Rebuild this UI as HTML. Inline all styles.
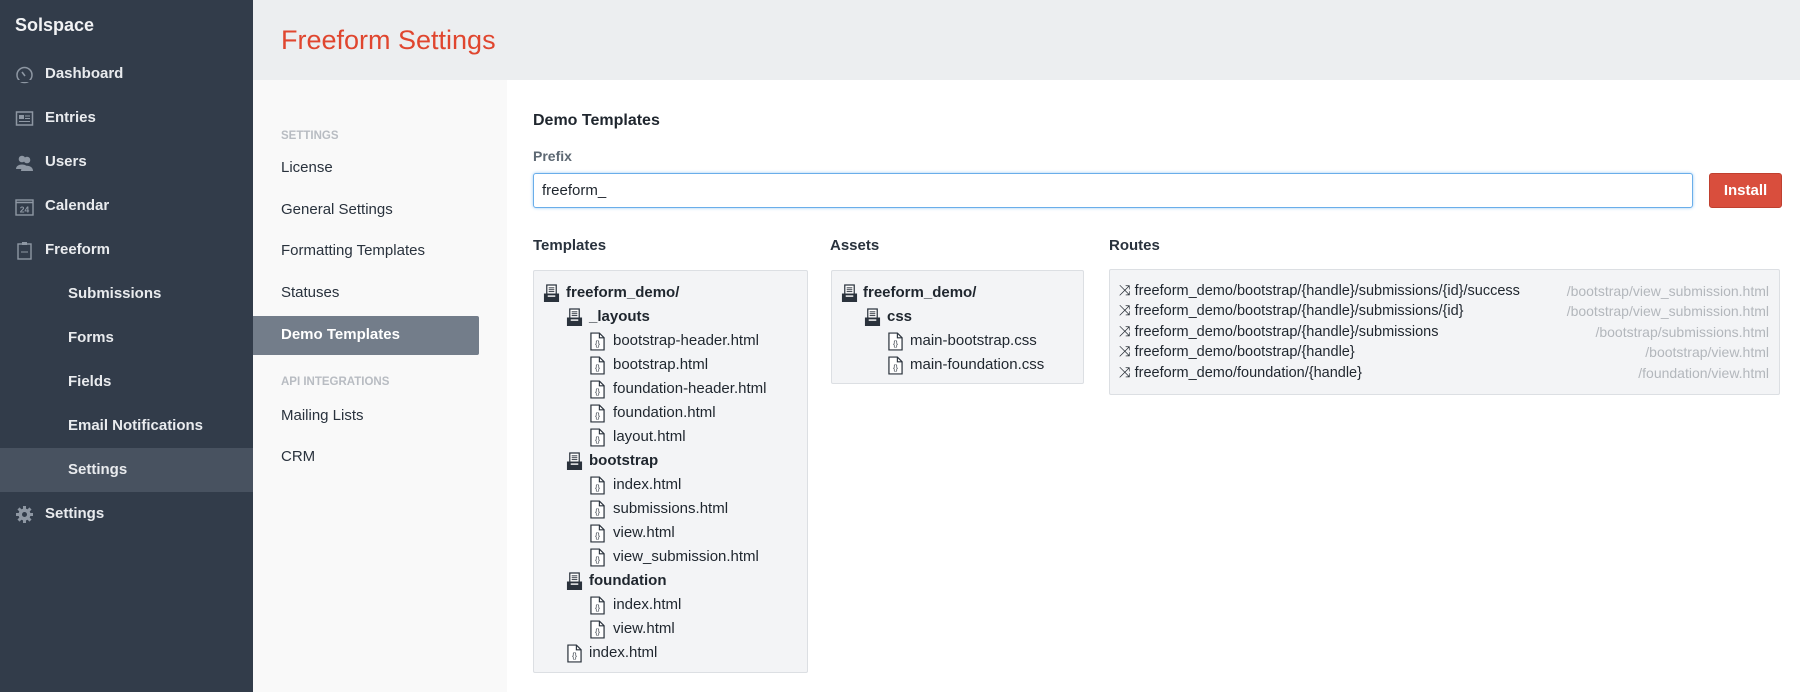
<!DOCTYPE html>
<html><head><meta charset="utf-8"><style>
*{margin:0;padding:0;box-sizing:border-box}
body{width:1800px;height:692px;overflow:hidden;font-family:"Liberation Sans",Arial,sans-serif;background:#fff;position:relative;color:#29323d}
.abs{position:absolute;white-space:nowrap}
#side{position:absolute;left:0;top:0;width:253px;height:692px;background:#323c4a}
.si{position:absolute;left:0;width:253px;height:44px;line-height:44px;color:#e9ebee;font-weight:bold;font-size:15px}
.si .t{position:absolute;left:45px}
.si.sub .t{left:68px}
.si svg{position:absolute;left:15px;top:13px}
#hdr{position:absolute;left:253px;top:0;width:1547px;height:80px;background:#eceef0}
#subnav{position:absolute;left:253px;top:80px;width:254px;height:612px;background:#f9f9f9}
.sn{position:absolute;left:281px;font-size:15px;color:#29323d;white-space:nowrap}
.cap{position:absolute;left:281px;font-size:11.5px;font-weight:bold;color:#b8bcc2;white-space:nowrap}
.box{position:absolute;background:#f3f4f6;border:1px solid #dcdfe3;border-radius:2px}
.row{position:absolute;font-size:15px;color:#1f262e;height:24px;line-height:24px;white-space:nowrap}
.row svg{position:absolute;left:0;top:3px}
.row span{position:absolute;white-space:nowrap}
.b{font-weight:bold}
.rt{position:absolute;left:1119px;font-size:14.5px;color:#1f262e;white-space:nowrap}
.rr{position:absolute;right:31px;font-size:14px;color:#b3b7bc;text-align:right;white-space:nowrap}
</style></head><body>
<svg width="0" height="0" style="position:absolute"><defs>
<symbol id="fold" viewBox="0 0 18 20"><rect x="4" y="1" width="10" height="10" fill="#fff" stroke="#2a323c" stroke-width="1.3"/><line x1="6" y1="4" x2="12" y2="4" stroke="#2a323c"/><line x1="6" y1="6" x2="12" y2="6" stroke="#2a323c"/><line x1="6" y1="8" x2="12" y2="8" stroke="#2a323c"/><path d="M1 10 H17 V19 H1 Z" fill="#2a323c"/><rect x="5" y="12" width="8" height="1.5" fill="#fff"/></symbol>
<symbol id="file" viewBox="0 0 16 20"><path d="M1 1 H10 L15 6 V19 H1 Z" fill="#fff" stroke="#2a323c" stroke-width="1.3"/><path d="M10 1 V6 H15" fill="none" stroke="#2a323c" stroke-width="1.2"/><text x="8" y="15" font-size="8" text-anchor="middle" font-family="Liberation Sans" fill="#2a323c">{}</text></symbol>
</defs></svg>

<div id="side">
<div class="abs" style="left:15px;top:15px;font-size:18px;font-weight:bold;color:#f1f2f4">Solspace</div>
<div class="si" style="top:52px"><svg width="19" height="19" viewBox="0 0 19 19"><circle cx="9.5" cy="10" r="7.5" fill="none" stroke="#8e97a3" stroke-width="1.5"/><line x1="7" y1="7" x2="10" y2="11" stroke="#8e97a3" stroke-width="1.6"/><line x1="2" y1="16" x2="17" y2="16" stroke="#323c4a" stroke-width="2"/></svg><span class="t">Dashboard</span></div>
<div class="si" style="top:96px"><svg width="19" height="19" viewBox="0 0 19 19"><rect x="1.5" y="3" width="16" height="13" fill="none" stroke="#8e97a3" stroke-width="1.5"/><rect x="4" y="6" width="5" height="4" fill="#8e97a3"/><line x1="10" y1="7" x2="15" y2="7" stroke="#8e97a3"/><line x1="10" y1="9.5" x2="15" y2="9.5" stroke="#8e97a3"/><line x1="4" y1="12.5" x2="15" y2="12.5" stroke="#8e97a3"/></svg><span class="t">Entries</span></div>
<div class="si" style="top:140px"><svg width="19" height="19" viewBox="0 0 19 19"><circle cx="7" cy="6" r="3.3" fill="#8e97a3"/><path d="M1 16 C1 10 13 10 13 16 Z" fill="#8e97a3"/><circle cx="12" cy="7" r="3.3" fill="#8e97a3"/><path d="M6 18 C6 11 18 11 18 18 Z" fill="#8e97a3"/></svg><span class="t">Users</span></div>
<div class="si" style="top:184px"><svg width="19" height="19" viewBox="0 0 19 19"><rect x="1" y="3" width="17" height="15" fill="none" stroke="#8e97a3" stroke-width="1.4"/><line x1="1" y1="5.5" x2="18" y2="5.5" stroke="#8e97a3" stroke-width="1.5"/><text x="9.5" y="15.5" font-size="8.5" text-anchor="middle" fill="#8e97a3" font-family="Liberation Sans">24</text></svg><span class="t">Calendar</span></div>
<div class="si" style="top:228px"><svg width="19" height="19" viewBox="0 0 19 19"><rect x="3" y="3" width="13" height="15" fill="none" stroke="#8e97a3" stroke-width="1.4"/><rect x="7" y="1" width="5" height="3" fill="#8e97a3"/><line x1="6" y1="11" x2="13" y2="11" stroke="#8e97a3"/></svg><span class="t">Freeform</span></div>
<div class="si sub" style="top:272px"><span class="t">Submissions</span></div>
<div class="si sub" style="top:316px"><span class="t">Forms</span></div>
<div class="si sub" style="top:360px"><span class="t">Fields</span></div>
<div class="si sub" style="top:404px"><span class="t">Email Notifications</span></div>
<div class="si sub" style="top:448px;background:#485260"><span class="t">Settings</span></div>
<div class="si" style="top:492px"><svg width="19" height="19" viewBox="0 0 19 19"><g fill="#8e97a3"><circle cx="9.5" cy="9.5" r="6"/><rect x="8" y="1" width="3" height="17"/><rect x="1" y="8" width="17" height="3"/><rect x="8" y="1" width="3" height="17" transform="rotate(45 9.5 9.5)"/><rect x="8" y="1" width="3" height="17" transform="rotate(-45 9.5 9.5)"/></g><circle cx="9.5" cy="9.5" r="2.5" fill="#323c4a"/></svg><span class="t">Settings</span></div>
</div>

<div id="hdr"><div class="abs" style="left:28px;top:25px;font-size:27px;color:#e0462f">Freeform Settings</div></div>

<div id="subnav"></div>
<div class="cap" style="top:130px">SETTINGS</div>
<div class="sn" style="top:159px">License</div>
<div class="sn" style="top:201px">General Settings</div>
<div class="sn" style="top:242px">Formatting Templates</div>
<div class="sn" style="top:284px">Statuses</div>
<div class="abs" style="left:253px;top:316px;width:226px;height:39px;background:#737d8a;border-radius:0 2px 2px 0"></div>
<div class="sn b" style="top:326px;color:#fff">Demo Templates</div>
<div class="cap" style="top:376px">API INTEGRATIONS</div>
<div class="sn" style="top:407px">Mailing Lists</div>
<div class="sn" style="top:448px">CRM</div>

<div class="abs b" style="left:533px;top:112px;font-size:16px;color:#1f262e">Demo Templates</div>
<div class="abs b" style="left:533px;top:148px;font-size:14px;color:#5d6873">Prefix</div>
<div class="abs" style="left:533px;top:173px;width:1160px;height:35px;border:1px solid #6aaeea;border-radius:3px;box-shadow:0 0 3px #9ccbf3;background:#fff;font-size:15px;line-height:33px;padding-left:8px;color:#1f262e">freeform_</div>
<div class="abs b" style="left:1709px;top:173px;width:73px;height:35px;background:#d94e3d;border:1px solid #c0402f;border-radius:3px;color:#fff;font-size:15px;line-height:33px;text-align:center">Install</div>

<div class="abs b" style="left:533px;top:237px;font-size:15px">Templates</div>
<div class="abs b" style="left:830px;top:237px;font-size:15px">Assets</div>
<div class="abs b" style="left:1109px;top:237px;font-size:15px">Routes</div>

<div class="box" style="left:533px;top:270px;width:275px;height:403px"></div>
<div class="box" style="left:831px;top:270px;width:253px;height:114px"></div>
<div class="box" style="left:1109px;top:269px;width:671px;height:126px"></div>

<div class="row b" style="left:543px;top:281px"><svg width="17" height="19"><use href="#fold"/></svg><span style="left:23px">freeform_demo/</span></div>
<div class="row b" style="left:566px;top:305px"><svg width="17" height="19"><use href="#fold"/></svg><span style="left:23px">_layouts</span></div>
<div class="row" style="left:590px;top:329px"><svg width="15" height="19"><use href="#file"/></svg><span style="left:23px">bootstrap-header.html</span></div>
<div class="row" style="left:590px;top:353px"><svg width="15" height="19"><use href="#file"/></svg><span style="left:23px">bootstrap.html</span></div>
<div class="row" style="left:590px;top:377px"><svg width="15" height="19"><use href="#file"/></svg><span style="left:23px">foundation-header.html</span></div>
<div class="row" style="left:590px;top:401px"><svg width="15" height="19"><use href="#file"/></svg><span style="left:23px">foundation.html</span></div>
<div class="row" style="left:590px;top:425px"><svg width="15" height="19"><use href="#file"/></svg><span style="left:23px">layout.html</span></div>
<div class="row b" style="left:566px;top:449px"><svg width="17" height="19"><use href="#fold"/></svg><span style="left:23px">bootstrap</span></div>
<div class="row" style="left:590px;top:473px"><svg width="15" height="19"><use href="#file"/></svg><span style="left:23px">index.html</span></div>
<div class="row" style="left:590px;top:497px"><svg width="15" height="19"><use href="#file"/></svg><span style="left:23px">submissions.html</span></div>
<div class="row" style="left:590px;top:521px"><svg width="15" height="19"><use href="#file"/></svg><span style="left:23px">view.html</span></div>
<div class="row" style="left:590px;top:545px"><svg width="15" height="19"><use href="#file"/></svg><span style="left:23px">view_submission.html</span></div>
<div class="row b" style="left:566px;top:569px"><svg width="17" height="19"><use href="#fold"/></svg><span style="left:23px">foundation</span></div>
<div class="row" style="left:590px;top:593px"><svg width="15" height="19"><use href="#file"/></svg><span style="left:23px">index.html</span></div>
<div class="row" style="left:590px;top:617px"><svg width="15" height="19"><use href="#file"/></svg><span style="left:23px">view.html</span></div>
<div class="row" style="left:567px;top:641px"><svg width="15" height="19"><use href="#file"/></svg><span style="left:22px">index.html</span></div>

<div class="row b" style="left:841px;top:281px"><svg width="17" height="19"><use href="#fold"/></svg><span style="left:22px">freeform_demo/</span></div>
<div class="row b" style="left:864px;top:305px"><svg width="17" height="19"><use href="#fold"/></svg><span style="left:23px">css</span></div>
<div class="row" style="left:888px;top:329px"><svg width="15" height="19"><use href="#file"/></svg><span style="left:22px">main-bootstrap.css</span></div>
<div class="row" style="left:888px;top:353px"><svg width="15" height="19"><use href="#file"/></svg><span style="left:22px">main-foundation.css</span></div>

<div class="rt" style="top:283px">⤨ freeform_demo/bootstrap/{handle}/submissions/{id}/success</div>
<div class="rt" style="top:303px">⤨ freeform_demo/bootstrap/{handle}/submissions/{id}</div>
<div class="rt" style="top:324px">⤨ freeform_demo/bootstrap/{handle}/submissions</div>
<div class="rt" style="top:344px">⤨ freeform_demo/bootstrap/{handle}</div>
<div class="rt" style="top:365px">⤨ freeform_demo/foundation/{handle}</div>
<div class="rr" style="top:283px">/bootstrap/view_submission.html</div>
<div class="rr" style="top:303px">/bootstrap/view_submission.html</div>
<div class="rr" style="top:324px">/bootstrap/submissions.html</div>
<div class="rr" style="top:344px">/bootstrap/view.html</div>
<div class="rr" style="top:365px">/foundation/view.html</div>
</body></html>
